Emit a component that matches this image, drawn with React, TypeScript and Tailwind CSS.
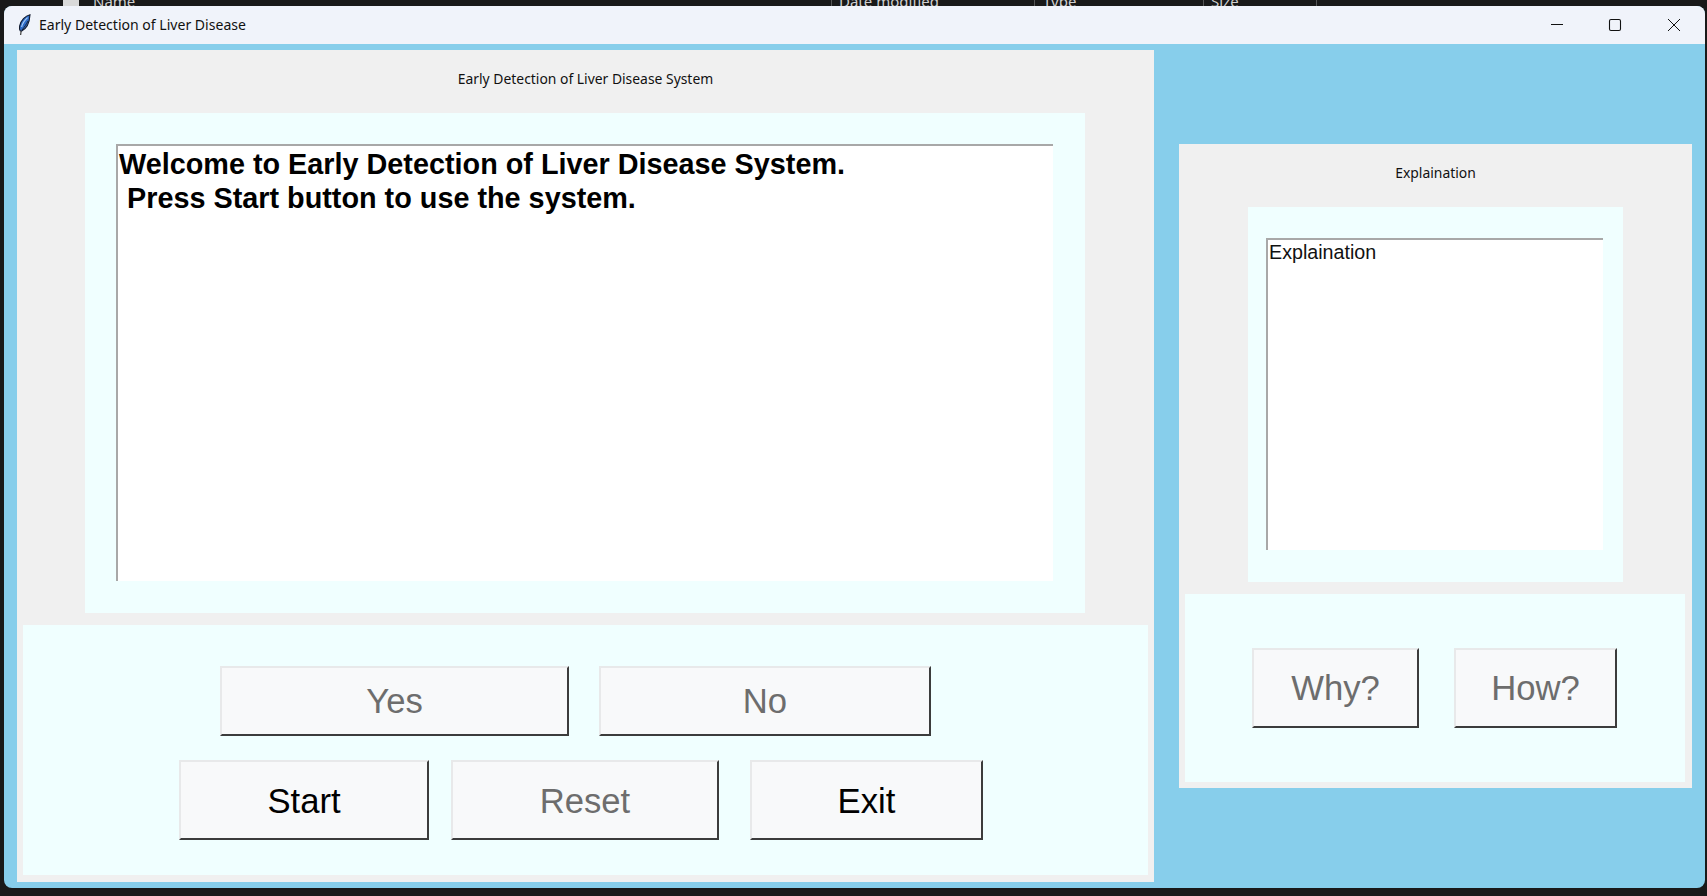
const sans = "font-['Liberation_Sans',Arial,sans-serif]";
const ui = "font-['Noto_Sans','Open_Sans',sans-serif]";

function TkButton({ label, width, height, disabled, offset }: { label: string; width: string; height: string; disabled?: boolean; offset?: boolean }) {
  return (
    <button
      className={`${width} ${height} shrink-0 flex items-center justify-center ${offset ? "pt-[1px]" : ""} bg-[#f8f9fa] border-2 border-t-[#e8e9ea] border-l-[#e8e9ea] border-r-[#3c3c3c] border-b-[#3c3c3c] text-[34.67px] ${sans} ${disabled ? "text-[#6d6d6d]" : "text-black"}`}
    >
      {label}
    </button>
  );
}

function Feather() {
  return (
    <svg width="16" height="22" viewBox="0 0 16 22" className="shrink-0">
      <path d="M13 .8C8.5 1.8 3.6 6.5 2.6 12.2c-.3 1.8-.1 3.4.6 4.6l1.2.4C9.6 14.8 12.6 8 13 .8Z" fill="#2f6cc8" stroke="#131b2e" strokeWidth="1.1" />
      <path d="M10.6 3.6C7.6 6.2 5.4 9.4 4.6 13" fill="none" stroke="#a9cdf5" strokeWidth="1.2" />
      <path d="M11 7C9.4 10 7.6 13 5 16" fill="none" stroke="#16213a" strokeWidth="1" />
      <path d="M4.2 16.6 3.6 21" fill="none" stroke="#4a4a4a" strokeWidth="1.3" />
    </svg>
  );
}

export default function App() {
  return (
    <div className="w-[1707px] h-[896px] bg-[#191919] overflow-hidden flex flex-col">
      {/* explorer window peeking out behind */}
      <div className={`h-[6px] shrink-0 overflow-hidden relative text-[15px] leading-[15px] text-[#d0d0d0] ${ui}`}>
        <div className="flex h-[6px] items-end">
          <div className="ml-[63px] w-[16px] h-[6px] bg-[#d9d9d9]" />
          <span className="ml-[14px] -mb-[3px] w-[738px]">Name</span>
          <div className="w-px h-[6px] bg-[#555]" />
          <span className="ml-[7px] -mb-[3px] w-[195px]">Date modified</span>
          <div className="w-px h-[6px] bg-[#555]" />
          <span className="ml-[8px] -mb-[3px] w-[160px]">Type</span>
          <div className="w-px h-[6px] bg-[#555]" />
          <span className="ml-[7px] -mb-[3px] w-[105px]">Size</span>
          <div className="w-px h-[6px] bg-[#555]" />
        </div>
      </div>

      <div className="ml-[4px] w-[1701px] h-[882px] rounded-[8px] overflow-hidden flex flex-col bg-[#87ceeb]">
        {/* title bar */}
        <div className={`h-[38px] shrink-0 bg-[#f0f3fa] flex items-center text-[14.05px] text-[#111] ${ui}`}>
          <div className="ml-[13px] w-[16px] flex justify-center"><Feather /></div>
          <span className="ml-[6px]">Early Detection of Liver Disease</span>
          <div className="ml-auto flex items-center">
            <svg width="14" height="14" viewBox="0 0 14 14" className="mr-[44px]"><path d="M1 6.5h12" stroke="#111" strokeWidth="1" /></svg>
            <svg width="14" height="14" viewBox="0 0 14 14" className="mr-[45px]"><rect x="1.5" y="1.5" width="11" height="11" rx="1.5" fill="none" stroke="#111" strokeWidth="1.1" /></svg>
            <svg width="14" height="14" viewBox="0 0 14 14" className="mr-[24px]"><path d="M1 1l12 12M13 1 1 13" stroke="#111" strokeWidth="1" /></svg>
          </div>
        </div>

        {/* client area */}
        <div className="flex-1 flex items-start">
          <div className="ml-[13px] mt-[6px] w-[1137px] h-[832px] bg-[#f0f0f0] flex flex-col">
            <div className={`h-[63px] shrink-0 flex items-center justify-center pb-[5px] text-[13.9px] text-[#111] ${ui}`}>
              Early Detection of Liver Disease System
            </div>
            <div className="ml-[68px] w-[1000px] h-[500px] shrink-0 bg-[#f0ffff] pt-[31px] pl-[31px]">
              <div className={`w-[937px] h-[437px] bg-white border-t-2 border-l-2 border-t-[#a8a8a8] border-l-[#a8a8a8] pl-[1px] pt-[1px] text-[28.8px] leading-[34px] font-bold text-black whitespace-pre ${sans}`}>
                {"Welcome to Early Detection of Liver Disease System.\n Press Start button to use the system."}
              </div>
            </div>
            <div className="ml-[6px] mt-[12px] w-[1125px] h-[250px] bg-[#f0ffff] flex flex-col">
              <div className="flex pl-[197px] pt-[41px] gap-[30px]">
                <TkButton label="Yes" width="w-[349px]" height="h-[70px]" disabled />
                <TkButton label="No" width="w-[332px]" height="h-[70px]" disabled />
              </div>
              <div className="flex pl-[156px] pt-[24px]">
                <TkButton label="Start" width="w-[250px]" height="h-[80px]" offset />
                <div className="ml-[22px]"><TkButton label="Reset" width="w-[268px]" height="h-[80px]" disabled offset /></div>
                <div className="ml-[31px]"><TkButton label="Exit" width="w-[233px]" height="h-[80px]" offset /></div>
              </div>
            </div>
          </div>

          <div className="ml-[25px] mt-[100px] w-[513px] h-[644px] bg-[#f0f0f0] flex flex-col">
            <div className={`h-[63px] shrink-0 flex items-center justify-center pb-[5px] text-[13.9px] text-[#111] ${ui}`}>
              Explaination
            </div>
            <div className="ml-[69px] w-[375px] h-[375px] shrink-0 bg-[#f0ffff] pt-[31px] pl-[18px]">
              <div className={`w-[337px] h-[312px] bg-white border-t-2 border-l-2 border-t-[#a8a8a8] border-l-[#a8a8a8] pl-[1px] text-[19.7px] leading-[24px] text-[#111] ${sans}`}>
                Explaination
              </div>
            </div>
            <div className="ml-[6px] mt-[12px] w-[500px] h-[188px] bg-[#f0ffff] flex pl-[67px] pt-[54px] gap-[35px]">
              <TkButton label="Why?" width="w-[167px]" height="h-[80px]" disabled />
              <TkButton label="How?" width="w-[163px]" height="h-[80px]" disabled />
            </div>
          </div>
        </div>
      </div>
    </div>
  );
}
